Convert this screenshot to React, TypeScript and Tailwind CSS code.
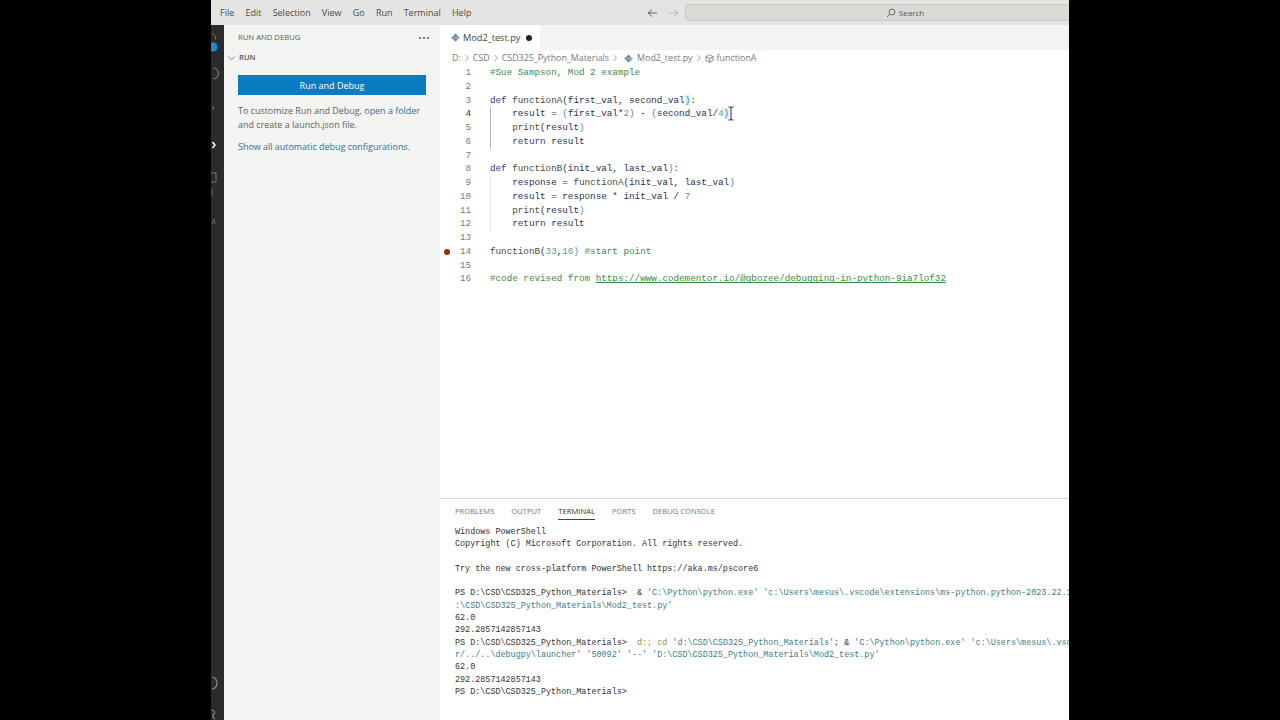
const menus = ["File", "Edit", "Selection", "View", "Go", "Run", "Terminal", "Help"];
const panelTabs = ["PROBLEMS", "OUTPUT", "TERMINAL", "PORTS", "DEBUG CONSOLE"];

// token colours for the light theme, a bit washed out like the video
const C = "text-[#3c8a4e]";
const K = "text-[#2c3a8c]";
const F = "text-[#4d4a33]";
const V = "text-[#22315c]";
const N = "text-[#5f9a80]";
const B = "text-[#4f86c6]";
const H = "text-[#4f86c6] bg-[#dcebf7]";
const D = "text-[#333333]";
const L = "text-[#2f8f45] underline";

type Tok = [string, string];

const code: Tok[][] = [
  [["#Sue Sampson, Mod 2 example", C]],
  [],
  [["def ", K], ["functionA", F], ["(", D], ["first_val", V], [", ", D], ["second_val", V], [")", H], [":", D]],
  [["    ", D], ["result", V], [" = ", D], ["(", B], ["first_val", V], ["*", D], ["2", N], [")", B], [" - ", D], ["(", B], ["second_val", V], ["/", D], ["4", N], [")", H]],
  [["    ", D], ["print", F], ["(", D], ["result", V], [")", B]],
  [["    ", D], ["return ", K], ["result", V]],
  [],
  [["def ", K], ["functionB", F], ["(", D], ["init_val", V], [", ", D], ["last_val", V], [")", B], [":", D]],
  [["    ", D], ["response", V], [" = ", D], ["functionA", F], ["(", D], ["init_val", V], [", ", D], ["last_val", V], [")", B]],
  [["    ", D], ["result", V], [" = ", D], ["response", V], [" * ", D], ["init_val", V], [" / ", D], ["7", N]],
  [["    ", D], ["print", F], ["(", D], ["result", V], [")", B]],
  [["    ", D], ["return ", K], ["result", V]],
  [],
  [["functionB", F], ["(", D], ["33", N], [",", D], ["16", N], [")", B], [" ", D], ["#start point", C]],
  [],
  [["#code revised from ", C], ["https://www.codementor.io/@gbozee/debugging-in-python-9ia7lof32", L]],
];

const S = "text-[#3b7c8c]";
const Y = "text-[#8f8f35]";
const T = "text-[#333333]";

const term: Tok[][] = [
  [["Windows PowerShell", T]],
  [["Copyright (C) Microsoft Corporation. All rights reserved.", T]],
  [],
  [["Try the new cross-platform PowerShell https://aka.ms/pscore6", T]],
  [],
  [["PS D:\\CSD\\CSD325_Python_Materials>  & ", T], ["'C:\\Python\\python.exe' 'c:\\Users\\mesus\\.vscode\\extensions\\ms-python.python-2023.22.1", S]],
  [[":\\CSD\\CSD325_Python_Materials\\Mod2_test.py'", S]],
  [["62.0", T]],
  [["292.2857142857143", T]],
  [["PS D:\\CSD\\CSD325_Python_Materials>  ", T], ["d:; cd ", Y], ["'d:\\CSD\\CSD325_Python_Materials'", S], ["; & ", T], ["'C:\\Python\\python.exe' 'c:\\Users\\mesus\\.vscode", S]],
  [["r/../..\\debugpy\\launcher' '50092' '--' 'D:\\CSD\\CSD325_Python_Materials\\Mod2_test.py'", S]],
  [["62.0", T]],
  [["292.2857142857143", T]],
  [["PS D:\\CSD\\CSD325_Python_Materials>", T]],
];

function PyIcon() {
  return (
    <svg width="9" height="9" viewBox="0 0 10 10" className="shrink-0">
      <path d="M5 0.5 L7.5 3 L5 5 L2.5 3 Z" fill="#5f87a3" />
      <path d="M2.5 3 L5 5 L2.5 7.5 L0 5 Z" fill="#7d99ad" />
      <path d="M7.5 3 L10 5 L7.5 7.5 L5 5 Z" fill="#8fa6b5" />
      <path d="M5 5 L7.5 7.5 L5 9.5 L2.5 7.5 Z" fill="#6d90a8" />
    </svg>
  );
}

function Sep() {
  return (
    <svg width="6" height="8" viewBox="0 0 6 8" className="shrink-0">
      <path d="M1.5 1 L4.5 4 L1.5 7" fill="none" stroke="#8a8a8a" strokeWidth="0.8" />
    </svg>
  );
}

export default function App() {
  return (
    <div className="w-[1280px] h-[720px] bg-black overflow-hidden pl-[211px] pr-[211px] font-['Open_Sans',sans-serif]">
      <div className="w-[858px] h-full flex flex-col overflow-hidden">
        {/* title bar */}
        <div className="h-[25px] shrink-0 bg-[#e4e4e2] flex items-center pl-[9px] text-[9px] text-[#4a4a4a]">
          <div className="flex gap-[11.2px] w-[427px] pt-[1px]">
            {menus.map((m) => (
              <span key={m}>{m}</span>
            ))}
          </div>
          <svg width="32" height="10" viewBox="0 0 32 10" className="shrink-0">
            <path d="M1 5 H10 M1 5 L5 1.5 M1 5 L5 8.5" stroke="#555" strokeWidth="0.9" fill="none" />
            <path d="M22 5 H31 M31 5 L27 1.5 M31 5 L27 8.5" stroke="#b5b5b5" strokeWidth="0.9" fill="none" />
          </svg>
          <div className="ml-[6px] h-[17px] flex-1 -mr-[58px] bg-[#d9d9d6] border border-[#c9c9c6] rounded-[4px] flex items-center justify-center gap-[3px] pr-[2px]">
            <svg width="10" height="10" viewBox="0 0 10 10">
              <circle cx="6" cy="4" r="3" fill="none" stroke="#555" strokeWidth="0.8" />
              <path d="M3.8 6.2 L1 9" stroke="#555" strokeWidth="0.8" />
            </svg>
            <span className="text-[8px] text-[#555] pt-[1px]">Search</span>
          </div>
        </div>

        <div className="flex-1 flex min-h-0">
          {/* activity bar, icons are cut off by the crop */}
          <div className="w-[13px] shrink-0 bg-[#2b2b2b]">
            <svg width="13" height="695" viewBox="0 0 13 695">
              <path d="M1 8 Q5 10 5 15" stroke="#777" strokeWidth="1" fill="none" />
              <circle cx="2" cy="22" r="4.5" fill="#1f8ad2" />
              <path d="M2 43 A5.5 5.5 0 0 1 2 54" stroke="#777" strokeWidth="1.2" fill="none" />
              <path d="M1 81 L3 83 L1 85" stroke="#777" strokeWidth="1" fill="none" />
              <path d="M1.5 117 L4 120 L1.5 123" stroke="#ffffff" strokeWidth="1.5" fill="none" />
              <path d="M0 148 H5 V157 H0" stroke="#777" strokeWidth="1" fill="none" />
              <path d="M1 164 V171" stroke="#666" strokeWidth="1" fill="none" />
              <path d="M1 199 L3 194 L4 199" stroke="#666" strokeWidth="1" fill="none" />
              <path d="M1 652 A5 6 0 0 1 1 664" stroke="#8a8a8a" strokeWidth="1.2" fill="none" />
              <path d="M0 685 Q5 686 3 689 Q0 691 4 694" stroke="#8a8a8a" strokeWidth="1.2" fill="none" />
            </svg>
          </div>

          {/* sidebar */}
          <div className="w-[216px] shrink-0 bg-[#f3f3f1] flex flex-col">
            <div className="h-[25px] shrink-0 flex items-center justify-between pl-[14px] pr-[11px] text-[7.7px] text-[#5c5c5c]">
              <span>RUN AND DEBUG</span>
              <span className="flex gap-[2px]">
                <i className="w-[2px] h-[2px] rounded-full bg-[#555]" />
                <i className="w-[2px] h-[2px] rounded-full bg-[#555]" />
                <i className="w-[2px] h-[2px] rounded-full bg-[#555]" />
              </span>
            </div>
            <div className="h-[16px] flex items-center gap-[4px] pl-[4px] text-[7.7px] font-semibold text-[#555]">
              <svg width="7" height="5" viewBox="0 0 7 5">
                <path d="M0.5 0.5 L3.5 3.8 L6.5 0.5" fill="none" stroke="#666" strokeWidth="0.8" />
              </svg>
              <span>RUN</span>
            </div>
            <div className="pl-[14px] pr-[14px] pt-[9px]">
              <div className="h-[20px] bg-[#0a7cc2] flex items-center justify-center pt-[1px] text-[9px] text-white">Run and Debug</div>
              <p className="mt-[9px] text-[8.95px] leading-[14px] text-[#616161] whitespace-nowrap">
                To customize Run and Debug, <span className="text-[#2f6f98]">open a folder</span>
                <br />
                and create a launch.json file.
              </p>
              <p className="mt-[8px] text-[8.95px] leading-[14px] text-[#2f6f98] whitespace-nowrap">
                Show all automatic debug configurations.
              </p>
            </div>
          </div>

          {/* editor + panel */}
          <div className="flex-1 min-w-0 flex flex-col bg-white">
            <div className="h-[25px] shrink-0 bg-[#f3f3f1] flex">
              <div className="w-[100px] bg-white flex items-center pl-[11px] text-[9.2px] text-[#444]">
                <PyIcon />
                <span className="ml-[3px] pt-[1px]">Mod2_test.py</span>
                <span className="ml-[6px] w-[6px] h-[6px] rounded-full bg-[#222]" />
              </div>
            </div>
            <div className="h-[16.2px] shrink-0 flex items-center pl-[12px] text-[8.9px] text-[#7a7a7a] whitespace-nowrap">
              <span>D:</span>
              <span className="mx-[3px]"><Sep /></span>
              <span>CSD</span>
              <span className="mx-[3px]"><Sep /></span>
              <span>CSD325_Python_Materials</span>
              <span className="mx-[3px]"><Sep /></span>
              <span className="ml-[3px]"><PyIcon /></span>
              <span className="ml-[4px]">Mod2_test.py</span>
              <span className="mx-[3px]"><Sep /></span>
              <svg width="9" height="9" viewBox="0 0 10 10" className="shrink-0">
                <path d="M5 0.8 L9 3 V7 L5 9.2 L1 7 V3 Z M1 3 L5 5 L9 3 M5 5 V9.2" fill="none" stroke="#666" strokeWidth="0.8" />
              </svg>
              <span className="ml-[3px]">functionA</span>
            </div>

            {/* code */}
            <div className="shrink-0 font-['Liberation_Mono',monospace] text-[9.28px] leading-[13.75px]">
              {code.map((line, i) => (
                <div key={i} className="relative h-[13.75px] flex whitespace-pre">
                  {i === 13 && <span className="absolute left-[4px] top-[4px] w-[6px] h-[6px] rounded-full bg-[#a1260d]" />}
                  <span className={`w-[31px] text-right shrink-0 ${i === 3 ? "text-[#333]" : "text-[#6e7f80]"}`}>{i + 1}</span>
                  <span className="relative ml-[19px]">
                    {i >= 3 && i <= 5 && <span className="absolute left-0 top-0 bottom-0 w-px bg-[#b5b5b5]" />}
                    {i >= 8 && i <= 11 && <span className="absolute left-0 top-0 bottom-0 w-px bg-[#e6e6e6]" />}
                    {line.map(([t, cls], j) => (
                      <span key={j} className={cls}>{t}</span>
                    ))}
                    {i === 3 && (
                      <span className="absolute left-[238px] -top-[1px]">
                        <svg width="6" height="15" viewBox="0 0 6 15">
                          <path d="M0.5 1 H2 Q3 1 3 2 V13 Q3 14 2 14 H0.5 M5.5 1 H4 Q3 1 3 2 M3 13 Q3 14 4 14 H5.5" fill="none" stroke="#111" strokeWidth="0.9" />
                        </svg>
                      </span>
                    )}
                  </span>
                </div>
              ))}
            </div>
            <div className="flex-1" />

            {/* panel */}
            <div className="h-[222px] shrink-0 border-t border-[#d9d9d6] flex flex-col">
              <div className="h-[26px] shrink-0 flex items-center gap-[17px] pl-[15px] text-[7.62px] text-[#777]">
                {panelTabs.map((t) => (
                  <span key={t} className={t === "TERMINAL" ? "relative text-[#333]" : ""}>
                    {t}
                    {t === "TERMINAL" && <i className="absolute left-0 right-0 -bottom-[2px] h-px bg-[#444]" />}
                  </span>
                ))}
              </div>
              <div className="pl-[15px] pt-[1px] font-['Liberation_Mono',monospace] text-[8.43px] leading-[12.3px]">
                {term.map((line, i) => (
                  <div key={i} className="h-[12.3px] whitespace-pre overflow-hidden">
                    {line.map(([t, cls], j) => (
                      <span key={j} className={cls}>{t}</span>
                    ))}
                  </div>
                ))}
              </div>
            </div>
          </div>
        </div>
      </div>
    </div>
  );
}
